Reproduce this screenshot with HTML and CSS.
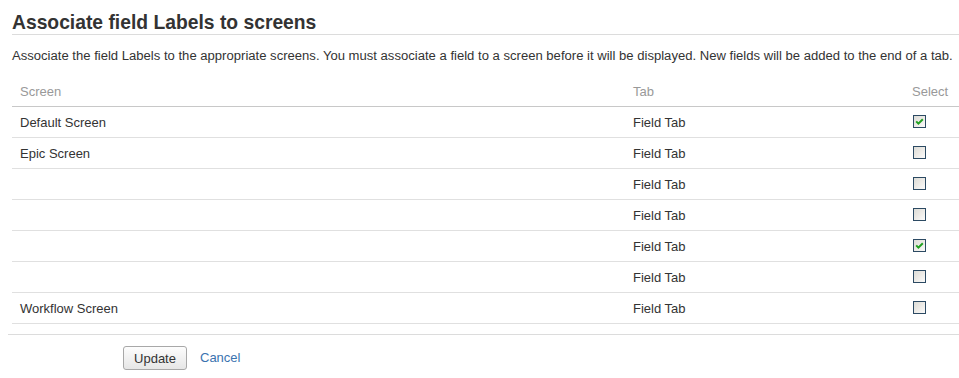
FILE: index.html
```html
<!DOCTYPE html>
<html>
<head>
<meta charset="utf-8">
<link rel="stylesheet" href="styles.css">
</head>
<body>
<div class="page">
  <div class="section">
    <h2 class="title">Associate field Labels to screens</h2>
    <p class="desc">Associate the field Labels to the appropriate screens. You must associate a field to a screen before it will be displayed. New fields will be added to the end of a tab.</p>
    <table class="grid">
      <thead>
        <tr><th class="c-screen">Screen</th><th class="c-tab">Tab</th><th class="c-sel">Select</th></tr>
      </thead>
      <tbody>
        <tr><td>Default Screen</td><td>Field Tab</td><td><span class="cb checked"><svg viewBox="0 0 11 11" width="11" height="11"><path d="M2.2 5.4 L4.4 7.6 L8.8 3.2" fill="none" stroke="#21a121" stroke-width="2"/></svg></span></td></tr>
        <tr><td>Epic Screen</td><td>Field Tab</td><td><span class="cb"></span></td></tr>
        <tr><td></td><td>Field Tab</td><td><span class="cb"></span></td></tr>
        <tr><td></td><td>Field Tab</td><td><span class="cb"></span></td></tr>
        <tr><td></td><td>Field Tab</td><td><span class="cb checked"><svg viewBox="0 0 11 11" width="11" height="11"><path d="M2.2 5.4 L4.4 7.6 L8.8 3.2" fill="none" stroke="#21a121" stroke-width="2"/></svg></span></td></tr>
        <tr><td></td><td>Field Tab</td><td><span class="cb"></span></td></tr>
        <tr><td>Workflow Screen</td><td>Field Tab</td><td><span class="cb"></span></td></tr>
      </tbody>
    </table>
  </div>
  <div class="buttons">
    <button class="btn" type="button">Update</button>
    <a class="cancel" href="#">Cancel</a>
  </div>
</div>
</body>
</html>
```

FILE: styles.css
```css
html, body {
  margin: 0;
  padding: 0;
  background: #fff;
}
body {
  font-family: "Liberation Sans", Arial, sans-serif;
  font-size: 13px;
  line-height: 16px;
  color: #333;
  overflow: hidden;
}
.page {
  padding-left: 8px;
}
.section {
  padding-left: 4px;
}
.title {
  margin: 0;
  padding-top: 12px;
  font-size: 19.3px;
  line-height: 22px;
  font-weight: bold;
  color: #333;
  border-bottom: 1px solid #dcdcdc;
}
.desc {
  margin: 13px 0 13px;
  white-space: nowrap;
  font-size: 13.08px;
}
.grid {
  border-collapse: collapse;
  width: 947px;
  table-layout: fixed;
}
.grid th {
  font-weight: normal;
  color: #999;
  text-align: left;
  padding: 7px 8px 6px;
  border-bottom: 1px solid #c8c8c8;
}
.c-screen { width: 597px; }
.c-tab { width: 263px; }
.c-sel { width: 39px; }
.grid td {
  padding: 8px 8px 6px;
  height: 16px;
  line-height: 16px;
  border-bottom: 1px solid #e0e0e0;
  color: #333;
}
.cb {
  display: inline-block;
  box-sizing: border-box;
  width: 13px;
  height: 13px;
  border: 1px solid #2c4a63;
  background: linear-gradient(135deg, #dcdcd7 0%, #eceae6 50%, #fbfbfb 100%);
  vertical-align: -1px;
  margin-left: 1px;
}
.cb svg {
  display: block;
}
.buttons {
  margin-top: 10px;
  border-top: 1px solid #dcdcdc;
  padding: 11px 0 0 115px;
  display: flex;
  align-items: center;
  gap: 13px;
}
.btn {
  font-family: "Liberation Sans", Arial, sans-serif;
  font-size: 13px;
  color: #333;
  width: 64px;
  height: 24px;
  padding: 1px 0 0;
  border: 1px solid #a8a8a8;
  border-radius: 3px;
  background: linear-gradient(#fdfdfd, #e6e6e6);
}
.cancel {
  color: #3b73af;
  text-decoration: none;
}
```
